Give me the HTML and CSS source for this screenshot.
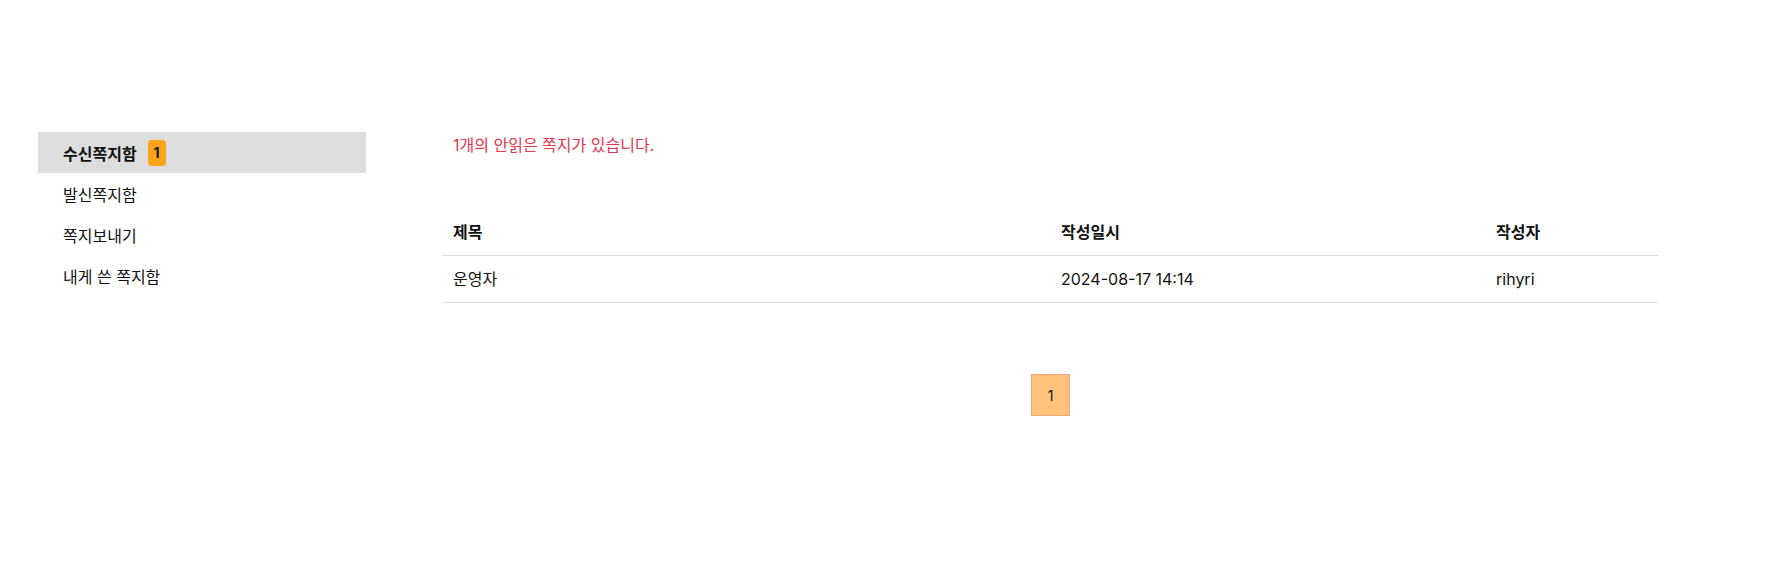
FILE: index.html
```html
<!DOCTYPE html>
<html lang="ko">
<head>
  <meta charset="UTF-8" />
  <title>쪽지함</title>
  <link rel="stylesheet" href="styles.css">
</head>
<body>
  <div class="wrap">
    <ul class="side-menu">
      <li class="active">수신쪽지함 <span class="badge">1</span></li>
      <li>발신쪽지함</li>
      <li>쪽지보내기</li>
      <li>내게 쓴 쪽지함</li>
    </ul>

    <div class="content">
      <p class="notice">1개의 안읽은 쪽지가 있습니다.</p>

      <table class="msg-table">
        <thead>
          <tr>
            <th class="col-title">제목</th>
            <th class="col-date">작성일시</th>
            <th class="col-writer">작성자</th>
          </tr>
        </thead>
        <tbody>
          <tr>
            <td>운영자</td>
            <td>2024-08-17 14:14</td>
            <td>rihyri</td>
          </tr>
        </tbody>
      </table>

      <div class="paging">
        <span class="page on">1</span>
      </div>
    </div>
  </div>
</body>
</html>
```

FILE: styles.css
```css
* { box-sizing: border-box; }

body {
  margin: 0;
  padding: 0;
  font-family: Inter, "Noto Sans CJK KR", sans-serif;
  font-size: 16px;
  color: #111;
  background: #fff;
}

.wrap {
  display: flex;
  align-items: flex-start;
  padding: 132px 0 0 38px;
  gap: 77px;
}

.side-menu {
  list-style: none;
  margin: 0;
  padding: 0;
  width: 328px;
  flex-shrink: 0;
}

.side-menu li {
  display: flex;
  align-items: center;
  height: 41px;
  padding: 0 25px;
  cursor: pointer;
}

.side-menu li.active {
  background: #dddddd;
  font-weight: bold;
}

.badge {
  display: inline-flex;
  align-items: center;
  justify-content: center;
  width: 18px;
  height: 26px;
  margin-left: 11px;
  border-radius: 4px;
  background: #ffa31a;
  font-size: 14px;
  font-weight: bold;
  color: #111;
}

.content {
  width: 1215px;
  flex-shrink: 0;
}

.notice {
  margin: 2px 0 0;
  padding-left: 10px;
  line-height: 22px;
  color: #e0394a;
}

.msg-table {
  width: 100%;
  margin-top: 53px;
  border-collapse: collapse;
}

.msg-table th,
.msg-table td {
  padding: 12px 10px;
  line-height: 22px;
  text-align: left;
  border-bottom: 1px solid #dddddd;
}

.msg-table th {
  font-weight: bold;
}

.col-title { width: 608px; }
.col-date { width: 435px; }
.col-writer { width: 172px; }

.paging {
  display: flex;
  justify-content: center;
  margin-top: 71px;
}

.page {
  display: flex;
  align-items: center;
  justify-content: center;
  width: 39px;
  height: 42px;
  border: 1px solid #f4a582;
  background: #ffc27b;
  font-size: 15px;
  color: #222;
}
```
